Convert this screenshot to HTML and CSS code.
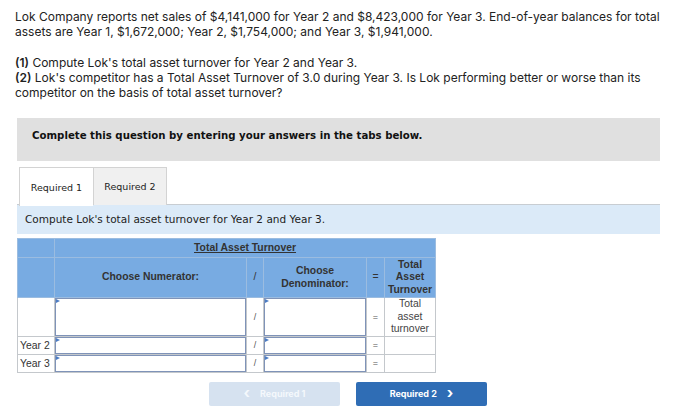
FILE: index.html
```html
<!DOCTYPE html>
<html>
<head>
<meta charset="utf-8">
<link rel="stylesheet" href="styles.css">
</head>
<body>
<div class="question">
  <p class="intro">Lok Company reports net sales of $4,141,000 for Year 2 and $8,423,000 for Year 3. End-of-year balances for total<br>assets are Year 1, $1,672,000; Year 2, $1,754,000; and Year 3, $1,941,000.</p>
  <p class="part"><b>(1)</b> Compute Lok's total asset turnover for Year 2 and Year 3.</p>
  <p class="part"><b>(2)</b> Lok's competitor has a Total Asset Turnover of 3.0 during Year 3. Is Lok performing better or worse than its<br>competitor on the basis of total asset turnover?</p>
</div>
<div class="notice">Complete this question by entering your answers in the tabs below.</div>
<div class="tabs">
  <div class="tab active">Required 1</div>
  <div class="tab">Required 2</div>
</div>
<div class="instruction">Compute Lok's total asset turnover for Year 2 and Year 3.</div>
<table class="grid">
  <colgroup>
    <col class="c-label"><col class="c-num"><col class="c-op"><col class="c-den"><col class="c-eq"><col class="c-res">
  </colgroup>
  <tr class="h1">
    <th></th>
    <th colspan="5"><span class="u">Total Asset Turnover</span></th>
  </tr>
  <tr class="h2">
    <th></th>
    <th>Choose Numerator:</th>
    <th class="op">/</th>
    <th>Choose<br>Denominator:</th>
    <th class="op">=</th>
    <th>Total<br>Asset<br>Turnover</th>
  </tr>
  <tr class="r-big">
    <td></td>
    <td class="in"><div class="box"></div></td>
    <td class="op">/</td>
    <td class="in"><div class="box"></div></td>
    <td class="op">=</td>
    <td class="res">Total<br>asset<br>turnover</td>
  </tr>
  <tr class="r-sm">
    <td class="lbl">Year 2</td>
    <td class="in"><div class="box"></div></td>
    <td class="op">/</td>
    <td class="in"><div class="box"></div></td>
    <td class="op">=</td>
    <td class="res"></td>
  </tr>
  <tr class="r-sm">
    <td class="lbl">Year 3</td>
    <td class="in"><div class="box"></div></td>
    <td class="op">/</td>
    <td class="in"><div class="box"></div></td>
    <td class="op">=</td>
    <td class="res"></td>
  </tr>
</table>
<div class="nav">
  <div class="btn prev"><span class="chev">&lsaquo;</span> Required 1</div>
  <div class="btn next">Required 2 <span class="chev">&rsaquo;</span></div>
</div>
</body>
</html>
```
FILE: styles.css
```css
* { box-sizing: border-box; }
body {
  margin: 0;
  background: #fff;
  font-family: Inter, "Open Sans", sans-serif;
  color: #222;
}
.question {
  padding: 9px 20px 0 15px;
  font-size: 12px;
  line-height: 15px;
}
.question p { margin: 0; }
.question .intro { margin-bottom: 16px; }
.question b { font-weight: 600; }
.notice {
  margin: 18px 40px 0 17px;
  height: 43px;
  background: #e0e0e0;
  font-family: "DejaVu Sans", Verdana, sans-serif;
  font-weight: bold;
  font-size: 10.2px;
  padding: 12px 0 0 15px;
  color: #111;
}
.tabs {
  display: flex;
  margin: 6px 40px 0 17px;
  border-bottom: 1px solid #c8cdd2;
  padding-left: 2px;
  height: 38px;
}
.tab {
  width: 74px;
  height: 38px;
  border: 1px solid #d3d3d3;
  border-bottom: none;
  background: #f0f0f0;
  font-family: "DejaVu Sans", Verdana, sans-serif;
  font-size: 9.5px;
  color: #222;
  display: flex;
  align-items: center;
  justify-content: center;
}
.tab.active { background: #fff; height: 39px; margin-bottom: -1px; border-right: none; }
.instruction {
  margin: 0 40px 0 17px;
  height: 29px;
  background: #dbeaf8;
  font-family: "DejaVu Sans", Verdana, sans-serif;
  font-size: 10.5px;
  color: #222;
  padding: 8px 0 0 8px;
}
.grid {
  margin: 4px 0 0 17px;
  border-collapse: collapse;
  width: 418px;
  table-layout: fixed;
  font-family: "Liberation Sans", Arial, sans-serif;
  font-size: 10px;
  color: #333;
}
.c-label { width: 37px; }
.c-num { width: 192px; }
.c-op { width: 17px; }
.c-den { width: 103px; }
.c-eq { width: 18px; }
.c-res { width: 51px; }
.grid th, .grid td {
  border: 1px solid #c4c8cc;
  padding: 0;
  text-align: center;
  vertical-align: middle;
}
.grid th {
  background: #78abe2;
  color: #333;
  font-weight: bold;
  font-size: 10.4px;
  line-height: 12.5px;
  border-color: #9bbce0;
}
.h1 { height: 19px; }
.h1 th { border-bottom: 1px solid #9bbce0; }
.h2 { height: 40px; }
.h2 .op { font-weight: normal; }
.u { text-decoration: underline; }
.r-big { height: 38px; }
.r-sm { height: 18px; }
.grid td.lbl { text-align: left; padding-left: 2px; font-size: 10.4px; }
.grid td.op { font-size: 9px; color: #555; }
.grid td.res { line-height: 12.5px; font-size: 10.4px; color: #444; }
.grid td.in { position: relative; }
.box {
  position: absolute;
  inset: 0;
  border: 1px solid #7f93b8;
  background: #fff;
}
.box::before {
  content: "";
  position: absolute;
  left: 0;
  top: 0;
  border-left: 4px solid #4b7cc4;
  border-top: 2.5px solid transparent;
  border-bottom: 2.5px solid transparent;
}
.nav {
  display: flex;
  gap: 16px;
  margin: 9px 0 0 209px;
}
.btn {
  width: 131px;
  height: 24px;
  border-radius: 2px;
  display: flex;
  align-items: center;
  justify-content: center;
  font-family: Inter, "Open Sans", sans-serif;
  font-weight: bold;
  font-size: 9px;
  color: #fff;
  gap: 10px;
}
.btn.prev { background: #d6e2f0; color: #f4f8fc; }
.btn.next { background: #2f6db5; }
.chev { font-size: 15px; line-height: 15px; position: relative; top: -1px; }
```
